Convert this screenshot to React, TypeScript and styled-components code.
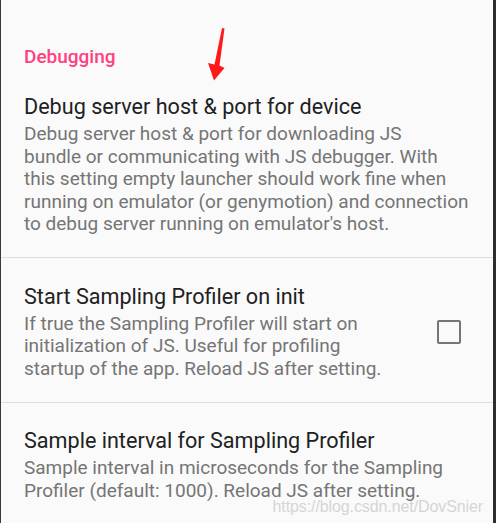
import React from 'react';
import styled, { createGlobalStyle } from 'styled-components';

const GlobalStyle = createGlobalStyle`
  html, body {
    margin: 0;
    padding: 0;
    background: #fafafa;
  }
`;

const Screen = styled.div`
  position: relative;
  width: 496px;
  height: 523px;
  box-sizing: border-box;
  overflow: hidden;
  background: #fafafa;
  border-left: 1px solid #3a3a3a;
  border-right: 3px solid #2e2e2e;
  padding-top: 45px;
  display: flex;
  flex-direction: column;
  font-family: Roboto, 'Liberation Sans', sans-serif;
`;

const Category = styled.div`
  padding: 0 23px 25px;
  color: #ff4081;
  font-size: 19px;
  font-weight: 500;
  line-height: 24px;
`;

const Pref = styled.div<{ $top?: number; $bottom?: number; $divider?: boolean }>`
  display: flex;
  align-items: center;
  padding: ${(p) => `${p.$top ?? 0}px 32px ${p.$bottom ?? 0}px 23px`};
  border-bottom: ${(p) => (p.$divider ? '1px solid #dedede' : 'none')};
`;

const Texts = styled.div`
  flex: 1;
  display: flex;
  flex-direction: column;
`;

const Title = styled.div`
  color: #212121;
  font-size: 21.6px;
  line-height: 26px;
  margin-bottom: 3px;
  white-space: nowrap;
`;

const Summary = styled.div`
  color: #757575;
  font-size: 19px;
  line-height: 22.5px;
  white-space: nowrap;
`;

const Checkbox = styled.div`
  width: 24px;
  height: 24px;
  box-sizing: border-box;
  border: 2.5px solid #757575;
  border-radius: 2px;
  flex-shrink: 0;
`;

const Arrow = styled.svg`
  position: absolute;
  left: 0;
  top: 0;
  pointer-events: none;
`;

const Watermark = styled.div`
  position: absolute;
  right: 10px;
  bottom: 7px;
  font-family: 'Liberation Sans', Arial, sans-serif;
  font-size: 16px;
  color: rgba(200, 200, 200, 0.75);
  letter-spacing: -0.1px;
`;

const App: React.FC = () => {
  return (
    <>
      <GlobalStyle />
      <Screen>
        <Category>Debugging</Category>
        <Pref $bottom={21} $divider>
          <Texts>
            <Title>Debug server host &amp; port for device</Title>
            <Summary>
              Debug server host &amp; port for downloading JS
              <br />
              bundle or communicating with JS debugger. With
              <br />
              this setting empty launcher should work fine when
              <br />
              running on emulator (or genymotion) and connection
              <br />
              to debug server running on emulator's host.
            </Summary>
          </Texts>
        </Pref>
        <Pref $top={26} $bottom={22} $divider>
          <Texts>
            <Title>Start Sampling Profiler on init</Title>
            <Summary>
              If true the Sampling Profiler will start on
              <br />
              initialization of JS. Useful for profiling
              <br />
              startup of the app. Reload JS after setting.
            </Summary>
          </Texts>
          <Checkbox />
        </Pref>
        <Pref $top={25}>
          <Texts>
            <Title>Sample interval for Sampling Profiler</Title>
            <Summary>
              Sample interval in microseconds for the Sampling
              <br />
              Profiler (default: 1000). Reload JS after setting.
            </Summary>
          </Texts>
        </Pref>
        <Arrow width="496" height="100" viewBox="0 0 496 100">
          <polygon
            points="221,28 223.5,28.5 218.5,65.5 223.5,68 213,80.5 207,63 213.5,64.5"
            fill="#ff1a1a"
          />
        </Arrow>
        <Watermark>https://blog.csdn.net/DovSnier</Watermark>
      </Screen>
    </>
  );
};

export default App;
